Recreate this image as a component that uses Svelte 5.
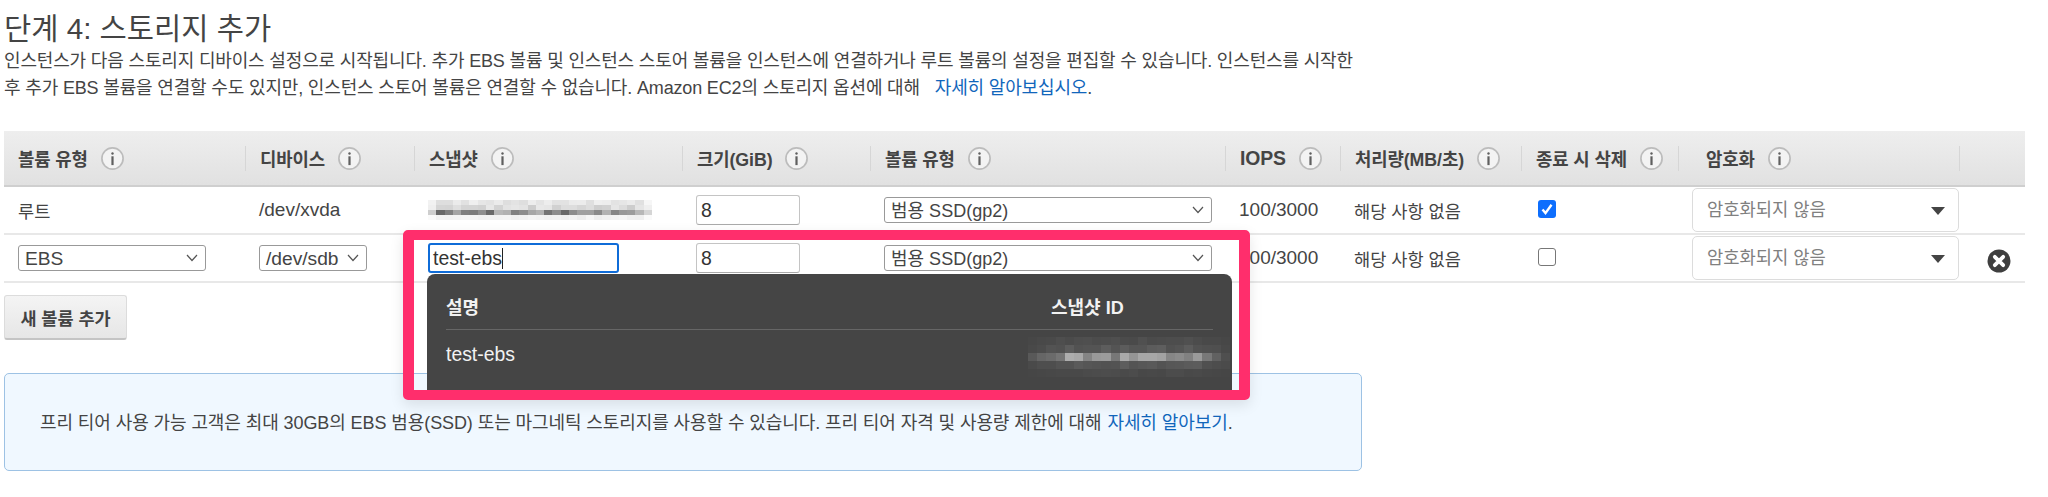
<script>
  function mosaic(seed, cols, weights, base, range, taper) {
    let s = seed;
    const out = [];
    for (const w of weights) {
      for (let c = 0; c < cols; c++) {
        s = (s * 1103515245 + 12345) % 2147483648;
        const r = (s >> 8) % 100 / 100;
        const fromEdge = Math.min(c, cols - 1 - c);
        const edge = fromEdge < taper ? (fromEdge + 1) / (taper + 2) : 1;
        const v = Math.round(base + range * w * edge * (0.4 + 0.6 * r));
        out.push(`rgb(${v},${v},${v})`);
      }
    }
    return out;
  }
  const lightBlur = mosaic(17, 27, [0.18, 0.28, 0.9, 0.08], 252, -170, 1);
  const darkBlur = mosaic(91, 22, [0.08, 0.2, 0.75, 0.22, 0.06], 69, 140, 3);
  const heads = [
    '볼륨 유형', '디바이스', '스냅샷', '크기(GiB)', '볼륨 유형', 'IOPS', '처리량(MB/초)', '종료 시 삭제', '암호화', ''
  ];
</script>

<main class="page">
  <h1>단계 4: 스토리지 추가</h1>
  <p class="desc">인스턴스가 다음 스토리지 디바이스 설정으로 시작됩니다. 추가 EBS 볼륨 및 인스턴스 스토어 볼륨을 인스턴스에 연결하거나 루트 볼륨의 설정을 편집할 수 있습니다. 인스턴스를 시작한<br />후 추가 EBS 볼륨을 연결할 수도 있지만, 인스턴스 스토어 볼륨은 연결할 수 없습니다. Amazon EC2의 스토리지 옵션에 대해 <a href="#top">자세히 알아보십시오</a>.</p>

  <div class="table">
    <div class="row head">
      {#each heads as h, i}
        <div class="th" class:sep={i > 0} class:last={i === 8}>
          {#if h}
            <span class:latin={h === 'IOPS'}>{h}</span>
            <svg class="info" viewBox="0 0 23 23" width="23" height="23" aria-hidden="true">
              <circle cx="11.5" cy="11.5" r="10.6" fill="#f3f3f3" stroke="#bcbcbc" stroke-width="1.7" />
              <circle cx="11.5" cy="6.5" r="1.2" fill="#5f5f5f" />
              <rect x="10.4" y="9.3" width="2.2" height="8.8" fill="#5f5f5f" />
            </svg>
          {/if}
        </div>
      {/each}
    </div>

    <div class="row body">
      <div class="td">루트</div>
      <div class="td latin">/dev/xvda</div>
      <div class="td">
        <div class="blur light">
          {#each lightBlur as c}<i style="background:{c}"></i>{/each}
        </div>
      </div>
      <div class="td"><div class="input size">8</div></div>
      <div class="td">
        <div class="sel wide">범용 SSD(gp2)
          <svg viewBox="0 0 12 8" width="12" height="8"><path d="M1 1l5 5.5L11 1" fill="none" stroke="#555" stroke-width="1.2" /></svg>
        </div>
      </div>
      <div class="td latin">100/3000</div>
      <div class="td">해당 사항 없음</div>
      <div class="td">
        <span class="check on">
          <svg viewBox="0 0 18 18" width="18" height="18"><path d="M4.5 9.5l3 3.6 6-8.4" fill="none" stroke="#fff" stroke-width="2.4" /></svg>
        </span>
      </div>
      <div class="td">
        <div class="enc">암호화되지 않음<b class="tri"></b></div>
      </div>
      <div class="td"></div>
    </div>

    <div class="row body">
      <div class="td">
        <div class="sel ebs latin">EBS
          <svg viewBox="0 0 12 8" width="12" height="8"><path d="M1 1l5 5.5L11 1" fill="none" stroke="#555" stroke-width="1.2" /></svg>
        </div>
      </div>
      <div class="td">
        <div class="sel dev latin">/dev/sdb
          <svg viewBox="0 0 12 8" width="12" height="8"><path d="M1 1l5 5.5L11 1" fill="none" stroke="#555" stroke-width="1.2" /></svg>
        </div>
      </div>
      <div class="td">
        <div class="input snap">test-ebs<span class="caret"></span></div>
      </div>
      <div class="td"><div class="input size">8</div></div>
      <div class="td">
        <div class="sel wide">범용 SSD(gp2)
          <svg viewBox="0 0 12 8" width="12" height="8"><path d="M1 1l5 5.5L11 1" fill="none" stroke="#555" stroke-width="1.2" /></svg>
        </div>
      </div>
      <div class="td latin">100/3000</div>
      <div class="td">해당 사항 없음</div>
      <div class="td"><span class="check"></span></div>
      <div class="td">
        <div class="enc">암호화되지 않음<b class="tri"></b></div>
      </div>
      <div class="td close">
        <svg viewBox="0 0 24 24" width="24" height="24" aria-hidden="true">
          <circle cx="12" cy="12" r="11.5" fill="#3f3f3f" />
          <path d="M7.8 7.8l8.4 8.4M16.2 7.8l-8.4 8.4" stroke="#fff" stroke-width="3.8" stroke-linecap="round" />
        </svg>
      </div>
    </div>
  </div>

  <button class="add">새 볼륨 추가</button>

  <div class="notice">프리 티어 사용 가능 고객은 최대 30GB의 EBS 범용(SSD) 또는 마그네틱 스토리지를 사용할 수 있습니다. 프리 티어 자격 및 사용량 제한에 대해 <a href="#top">자세히 알아보기</a>.</div>

  <div class="popup">
    <div class="pop-head"><span>설명</span><span class="pop-id">스냅샷 ID</span></div>
    <div class="pop-row">test-ebs</div>
    <div class="blur dark">
      {#each darkBlur as c}<i style="background:{c}"></i>{/each}
    </div>
  </div>
  <div class="highlight"></div>
</main>

<style>
  :global(body) {
    margin: 0;
    background: #fff;
  }
  .page {
    position: relative;
    width: 2048px;
    height: 497px;
    overflow: hidden;
    padding: 10px 0 0 4px;
    box-sizing: border-box;
    font-family: "Liberation Sans", "Noto Sans CJK KR", sans-serif;
    font-size: 17.6px;
    color: #444;
  }
  h1 {
    margin: 0;
    font-size: 29.6px;
    line-height: 38px;
    font-weight: 400;
    color: #444;
  }
  .desc {
    margin: 0;
    font-size: 18px;
    letter-spacing: -0.16px;
    line-height: 27px;
    color: #444;
  }
  a {
    color: #1166bb;
    text-decoration: none;
  }
  .desc a {
    margin-left: 10px;
  }
  .notice a {
    margin-left: 1px;
  }
  .table {
    margin-top: 29px;
    width: 2021px;
  }
  .row {
    display: grid;
    grid-template-columns: 241px 169px 268px 188px 355px 115px 181px 157px 281px 66px;
  }
  .head {
    height: 56px;
    box-sizing: border-box;
    background: linear-gradient(#eeeeee, #e1e1e1);
    border-bottom: 2px solid #cfcfcf;
    align-items: center;
  }
  .th {
    height: 25px;
    display: flex;
    align-items: center;
    gap: 13px;
    padding-left: 14px;
    font-weight: 700;
    font-size: 17.8px;
    letter-spacing: -0.1px;
    color: #444;
    box-sizing: border-box;
  }
  .th.sep {
    border-left: 1px solid #d6d6d6;
  }
  .th.last {
    padding-left: 27px;
  }
  .th .latin {
    font-size: 19.4px;
  }
  .info {
    flex: none;
  }
  .body {
    height: 48px;
    box-sizing: border-box;
    border-bottom: 2px solid #e8e8e8;
    align-items: center;
  }
  .td {
    padding-left: 14px;
    display: flex;
    align-items: center;
    min-width: 0;
    white-space: nowrap;
  }
  .td.latin {
    font-size: 19px;
  }
  .input {
    height: 30px;
    box-sizing: border-box;
    border: 1px solid #c4c4c4;
    border-bottom-color: #aaa;
    border-radius: 3px;
    padding-left: 4px;
    line-height: 28px;
    font-size: 19.4px;
    color: #333;
    display: flex;
    align-items: center;
  }
  .size {
    width: 104px;
  }
  .snap {
    width: 191px;
    border: 2px solid #0f6cd8;
    padding-left: 3px;
  }
  .caret {
    width: 1px;
    height: 21px;
    background: #222;
  }
  .sel {
    position: relative;
    height: 26px;
    box-sizing: border-box;
    border: 1px solid #999;
    border-radius: 3px;
    padding: 1px 0 0 6px;
    line-height: 24px;
    font-size: 18px;
    color: #444;
  }
  .sel.latin {
    font-size: 19.2px;
  }
  .sel svg {
    position: absolute;
    right: 7px;
    top: 8px;
  }
  .wide {
    width: 328px;
  }
  .ebs {
    width: 188px;
  }
  .dev {
    width: 108px;
  }
  .check {
    display: block;
    width: 16px;
    height: 16px;
    margin-left: 3px;
    border: 1px solid #777;
    border-radius: 3px;
    box-sizing: content-box;
    margin-top: -2px;
    background: #fff;
  }
  .check.on {
    width: 18px;
    height: 18px;
    border: 0;
    background: #0d6efd;
    margin-top: -2px;
  }
  .check svg {
    display: block;
  }
  .enc {
    position: relative;
    width: 267px;
    height: 44px;
    box-sizing: border-box;
    border: 1px solid #dcdcdc;
    border-radius: 5px;
    padding-left: 14px;
    line-height: 42px;
    font-size: 17.7px;
    color: #808080;
    background: #fff;
  }
  .tri {
    position: absolute;
    right: 13px;
    top: 18px;
    border-left: 7px solid transparent;
    border-right: 7px solid transparent;
    border-top: 8px solid #444;
  }
  .close {
    padding-left: 28px;
    margin-top: 5px;
  }
  .close svg {
    display: block;
  }
  .blur {
    display: grid;
  }
  .blur i {
    display: block;
  }
  .light {
    width: 224px;
    grid-template-columns: repeat(27, 1fr);
    grid-auto-rows: 5px;
  }
  .dark {
    position: absolute;
    left: 601px;
    top: 63px;
    width: 202px;
    grid-template-columns: repeat(22, 1fr);
    grid-auto-rows: 8px;
  }
  .add {
    display: block;
    margin-top: 12px;
    width: 123px;
    height: 45px;
    padding: 0;
    font: 700 17.5px "Liberation Sans", "Noto Sans CJK KR", sans-serif;
    color: #444;
    background: linear-gradient(#f4f4f4, #e6e6e6);
    border: 1px solid #dcdcdc;
    border-bottom: 2px solid #c4c4c4;
    border-radius: 3px;
  }
  .notice {
    margin-top: 33px;
    width: 1358px;
    height: 98px;
    box-sizing: border-box;
    padding: 36px 0 0 35px;
    line-height: 27px;
    font-size: 18px;
    letter-spacing: -0.09px;
    color: #444;
    background: #f0f8ff;
    border: 1px solid #9dc2e4;
    border-radius: 5px;
  }
  .popup {
    position: absolute;
    left: 427px;
    top: 274px;
    width: 805px;
    height: 126px;
    box-sizing: border-box;
    padding: 0 19px;
    background: #454545;
    border-radius: 8px;
    color: #f2f2f2;
  }
  .pop-head {
    display: flex;
    justify-content: space-between;
    height: 56px;
    box-sizing: border-box;
    padding-top: 19px;
    border-bottom: 1px solid #666;
    font-weight: 700;
    font-size: 18px;
  }
  .pop-id {
    width: 162px;
  }
  .pop-row {
    padding-top: 13px;
    line-height: 22px;
    font-size: 19.4px;
  }
  .highlight {
    position: absolute;
    left: 403px;
    top: 230px;
    width: 847px;
    height: 170px;
    box-sizing: border-box;
    border: 10px solid #ff2e6c;
    border-left-width: 11px;
    border-right-width: 11px;
    border-radius: 5px;
    box-shadow: 0 5px 14px rgba(0, 0, 0, 0.1);
  }
</style>
